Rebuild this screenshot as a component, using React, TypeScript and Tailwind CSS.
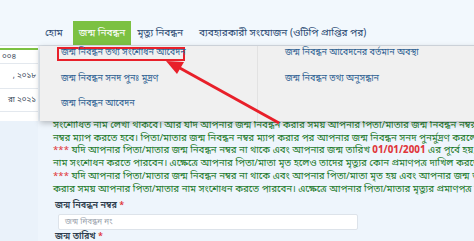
import React from "react";

const bn = { fontFamily: '"Noto Sans Bengali", "Noto Serif Bengali", "Noto Sans", sans-serif' };

export default function App() {
  return (
    <div className="relative w-[474px] h-[241px] overflow-hidden bg-[#eaf2fa]" style={bn}>
      {/* header band */}
      <div className="h-[45px] bg-[#f2f8fd] flex flex-col">
        <div className="h-[21px] shrink-0" />
        <div className="flex items-stretch h-[24px] shrink-0 pl-[40px] text-[10px] text-[#2b4a73] whitespace-nowrap">
          <div className="px-[5px] flex items-center">হোম</div>
          <div className="ml-[5px] px-[6px] flex items-center bg-[#7cc142] text-white">জন্ম নিবন্ধন</div>
          <div className="px-[6px] flex items-center">মৃত্যু নিবন্ধন</div>
          <div className="pl-[10px] flex items-center">ব্যবহারকারী সংযোজন (ওটিপি প্রাপ্তির পর)</div>
        </div>
      </div>
      <div className="h-px bg-[#d6dde4]" />

      <div className="flex">
        {/* left column */}
        <div className="w-[38px] shrink-0 bg-white h-[75px]">
          <div className="h-[2px]" />
          <div className="h-[2px] bg-[#7cc142]" />
          <div className="text-[8px] text-[#3a4a5a] whitespace-nowrap">
            <div className="h-[14px] flex items-center pl-[2px] border-b border-[#e3e8ee]">০০৪</div>
            <div className="h-[25px] flex items-center justify-end pr-[2px] border-b border-[#e3e8ee]">, ২০১৮</div>
            <div className="h-[23px] flex items-center justify-end pr-[2px] border-b border-[#e3e8ee]">রা ২০২১</div>
          </div>
        </div>

        {/* main */}
        <div className="flex-1 bg-[#eef5fc] pt-[74px] pl-[15px] whitespace-nowrap border-r-[3px] border-[#e3edf7]">
          <div className="text-[9.7px] leading-[12.7px] text-[#1d7a2c]">
            <div>সংশোধিত নাম লেখা থাকবে। আর যদি আপনার জন্ম নিবন্ধন করার সময় আপনার পিতা/মাতার জন্ম নিবন্ধন নম্বর না দিয়ে থাকেন, তবে</div>
            <div>নম্বর ম্যাপ করতে হবে। পিতা/মাতার জন্ম নিবন্ধন নম্বর ম্যাপ করার পর আপনার জন্ম নিবন্ধন সনদ পুনর্মুদ্রণ করলে, সেখানে পিতা/মাতার</div>
            <div><span className="text-[#e0353a]">***</span> যদি আপনার পিতা/মাতার জন্ম নিবন্ধন নম্বর না থাকে এবং আপনার জন্ম তারিখ <span className="text-[#e0353a] font-bold">01/01/2001</span> এর পূর্বে হয়, তবে আপনার জন্ম নিবন্ধন</div>
            <div>নাম সংশোধন করতে পারবেন। এক্ষেত্রে আপনার পিতা/মাতা মৃত হলেও তাদের মৃত্যুর কোন প্রমাণপত্র দাখিল করতে হবে না।</div>
            <div><span className="text-[#e0353a]">***</span> যদি আপনার পিতা/মাতার জন্ম নিবন্ধন নম্বর না থাকে এবং আপনার পিতা/মাতা মৃত হয় এবং আপনার জন্ম তারিখ <span className="text-[#e0353a] font-bold">01/01/2001</span> এর</div>
            <div>করার সময় আপনার পিতা/মাতার নাম সংশোধন করতে পারবেন। এক্ষেত্রে আপনার পিতা/মাতার মৃত্যুর প্রমাণপত্র দাখিল করতে হবে</div>
          </div>
          <div className="mt-[3px] pl-[2px] text-[9px] leading-[14px] font-semibold text-[#2d3d4d]">জন্ম নিবন্ধন নম্বর <span className="text-[#e0353a]">*</span></div>
          <div className="mt-[1px] ml-[5px] w-[300px] h-[16px] bg-white border border-[#dde3ea] rounded-[2px] flex items-center pl-[6px] text-[8px] text-[#9aa3ad]">জন্ম নিবন্ধন নং</div>
          <div className="pl-[2px] text-[9px] leading-[14px] font-semibold text-[#2d3d4d]">জন্ম তারিখ <span className="text-[#e0353a]">*</span></div>
        </div>
      </div>

      {/* dropdown */}
      <div className="absolute left-[40px] top-[46px] w-[440px] h-[75px] bg-[#f0f0f0] shadow-[0_2px_6px_rgba(0,0,0,0.25)] flex text-[9px] text-[#2d5f92] whitespace-nowrap">
        <div className="w-[218px] border-r border-[#e2e2e2] pl-[17px] pt-[1px]">
          <div className="h-[14px] w-[128px] border-2 border-[#e8202a] flex items-center pl-[2px]">জন্ম নিবন্ধন তথ্য সংশোধন আবেদন</div>
          <div className="h-[25px] flex items-end pl-[4px]">জন্ম নিবন্ধন সনদ পুনঃ মুদ্রণ</div>
          <div className="h-[25px] flex items-end pl-[4px]">জন্ম নিবন্ধন আবেদন</div>
        </div>
        <div className="pl-[27px] pt-[1px]">
          <div className="h-[14px] flex items-center">জন্ম নিবন্ধন আবেদনের বর্তমান অবস্থা</div>
          <div className="h-[25px] flex items-end">জন্ম নিবন্ধন তথ্য অনুসন্ধান</div>
        </div>
      </div>

      {/* arrow */}
      <svg className="absolute left-0 top-0" width="474" height="241">
        <line x1="279" y1="123" x2="178" y2="67" stroke="#e8202a" strokeWidth="3" />
        <polygon points="166,61 184,62 177,74" fill="#e8202a" />
      </svg>
    </div>
  );
}
